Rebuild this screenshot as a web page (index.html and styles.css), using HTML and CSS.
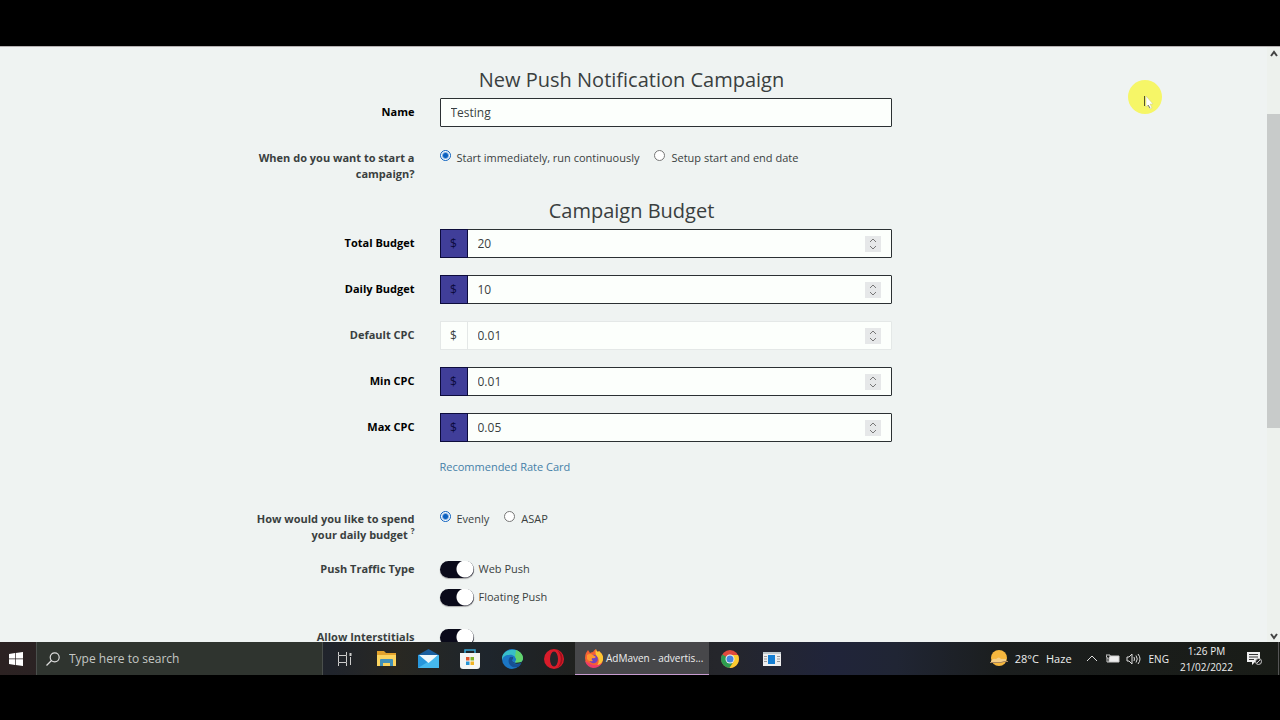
FILE: index.html
```html
<!DOCTYPE html>
<html lang="en">
<head>
    <meta charset="UTF-8">
    <meta name="viewport" content="width=device-width, initial-scale=1.0">
    <title>AdMaven - advertiser</title>
    <link rel="stylesheet" href="styles.css">
</head>
<body>
    <div class="browser">
        <main class="page">
            <form class="campaign">
                <h1>New Push Notification Campaign</h1>
                <div class="row">
                    <label class="row-label required" for="name">Name</label>
                    <input class="text-input" type="text" id="name" value="Testing">
                </div>
                <div class="row schedule" role="radiogroup" aria-labelledby="startLabel">
                    <span class="row-label" id="startLabel">When do you want to start a campaign?</span>
                    <div class="radios">
                        <label><input type="radio" name="start" checked>Start immediately, run continuously</label>
                        <label><input type="radio" name="start">Setup start and end date</label>
                    </div>
                </div>

                <h2>Campaign Budget</h2>
                <div class="row">
                    <label class="row-label required" for="totalBudget">Total Budget</label>
                    <div class="money">
                        <span class="currency">$</span>
                        <input type="number" id="totalBudget" value="20">
                        <span class="spinner">
                            <button type="button" aria-label="Increase"><svg viewBox="0 0 16 8"><path d="M5 6l3-3 3 3"/></svg></button>
                            <button type="button" aria-label="Decrease"><svg viewBox="0 0 16 8"><path d="M5 2l3 3 3-3"/></svg></button>
                        </span>
                    </div>
                </div>
                <div class="row">
                    <label class="row-label required" for="dailyBudget">Daily Budget</label>
                    <div class="money">
                        <span class="currency">$</span>
                        <input type="number" id="dailyBudget" value="10">
                        <span class="spinner">
                            <button type="button" aria-label="Increase"><svg viewBox="0 0 16 8"><path d="M5 6l3-3 3 3"/></svg></button>
                            <button type="button" aria-label="Decrease"><svg viewBox="0 0 16 8"><path d="M5 2l3 3 3-3"/></svg></button>
                        </span>
                    </div>
                </div>
                <div class="row">
                    <label class="row-label" for="defaultCpc">Default CPC</label>
                    <div class="money optional">
                        <span class="currency">$</span>
                        <input type="number" id="defaultCpc" step="0.01" value="0.01">
                        <span class="spinner">
                            <button type="button" aria-label="Increase"><svg viewBox="0 0 16 8"><path d="M5 6l3-3 3 3"/></svg></button>
                            <button type="button" aria-label="Decrease"><svg viewBox="0 0 16 8"><path d="M5 2l3 3 3-3"/></svg></button>
                        </span>
                    </div>
                </div>
                <div class="row">
                    <label class="row-label required" for="minCpc">Min CPC</label>
                    <div class="money">
                        <span class="currency">$</span>
                        <input type="number" id="minCpc" step="0.01" value="0.01">
                        <span class="spinner">
                            <button type="button" aria-label="Increase"><svg viewBox="0 0 16 8"><path d="M5 6l3-3 3 3"/></svg></button>
                            <button type="button" aria-label="Decrease"><svg viewBox="0 0 16 8"><path d="M5 2l3 3 3-3"/></svg></button>
                        </span>
                    </div>
                </div>
                <div class="row">
                    <label class="row-label required" for="maxCpc">Max CPC</label>
                    <div class="money">
                        <span class="currency">$</span>
                        <input type="number" id="maxCpc" step="0.01" value="0.05">
                        <span class="spinner">
                            <button type="button" aria-label="Increase"><svg viewBox="0 0 16 8"><path d="M5 6l3-3 3 3"/></svg></button>
                            <button type="button" aria-label="Decrease"><svg viewBox="0 0 16 8"><path d="M5 2l3 3 3-3"/></svg></button>
                        </span>
                    </div>
                </div>
                <div class="row rate-card">
                    <a href="#">Recommended Rate Card</a>
                </div>
                <div class="row spend" role="radiogroup" aria-labelledby="spendLabel">
                    <span class="row-label" id="spendLabel">How would you like to spend your daily budget <sup>?</sup></span>
                    <div class="radios">
                        <label><input type="radio" name="spend" checked>Evenly</label>
                        <label><input type="radio" name="spend">ASAP</label>
                    </div>
                </div>
                <div class="row">
                    <span class="row-label">Push Traffic Type</span>
                    <div class="switches">
                        <label><input class="switch" type="checkbox" checked>Web Push</label>
                        <label><input class="switch" type="checkbox" checked>Floating Push</label>
                    </div>
                </div>
                <div class="row">
                    <label class="row-label" for="interstitials">Allow Interstitials</label>
                    <div class="switches">
                        <input class="switch" type="checkbox" id="interstitials" checked>
                    </div>
                </div>
            </form>
        </main>
        <div class="scrollbar">
            <svg viewBox="0 0 13 14"><path d="M4 9l3-4 3 4"/></svg>
            <div class="track"><div class="thumb"></div></div>
            <svg viewBox="0 0 13 14"><path d="M4 6l3 4 3-4"/></svg>
        </div>
        <svg class="pointer" viewBox="0 0 34 34">
            <circle cx="17" cy="17" r="17" fill="#f6f667"/>
            <path d="M16.500 16v10" stroke="#55552a" fill="none"/>
            <path d="M18 16v11l2-2 2 4 2-1-2-4h3z" fill="#fff" stroke="#c9c98a" stroke-width=".5"/>
            <path d="M20 25l2 3" stroke="#777" fill="none"/>
        </svg>
    </div>

    <footer class="taskbar">
        <button class="start" aria-label="Start">
            <svg width="14" height="14" viewBox="0 0 14 14" fill="#fff"><path d="M0 2l6-1v5.600H0zM6.700 .9L14 0v6.600H6.700zM0 7.300h6V13l-6-1zM6.700 7.300H14V14l-7.300-1z"/></svg>
        </button>
        <label class="search">
            <svg width="14" height="14" viewBox="0 0 14 14" fill="none" stroke="#ddd" stroke-width="1.200"><circle cx="8.700" cy="5.300" r="4.500"/><path d="M5.500 8.500L.5 13.500"/></svg>
            <input type="text" placeholder="Type here to search" aria-label="Search">
        </label>
        <nav class="apps">
            <button aria-label="Task view">
                <svg width="15" height="14" viewBox="0 0 15 14" fill="none" stroke="#ccc"><path d="M1.500 0v3.500h8V0M1.500 14v-3.500h8V14M1.500 4v6M9.500 4v6M13.500 5v8"/><path d="M13.500 1v3" stroke-width="2"/></svg>
            </button>
            <button aria-label="File Explorer">
                <svg width="19" height="17" viewBox="0 0 19 17"><path d="M0 1h7l2 2h10v13H0z" fill="#e2a22c"/><path d="M0 5h19v11H0z" fill="#fbd460"/><path d="M3 16v-6q0-1 1-1h11q1 0 1 1v6h-3v-3H6v3z" fill="#4291b9"/></svg>
            </button>
            <button aria-label="Mail">
                <svg width="21" height="19" viewBox="0 0 21 19"><path d="M0 6l10.500-6L21 6v2H0z" fill="#1a5f9f"/><path d="M0 6h21v13H0z" fill="#2797dc"/><path d="M0 19L21 6v13z" fill="#45b9ef"/><path d="M1 6h19l-9.500 8z" fill="#eef8fc"/></svg>
            </button>
            <button aria-label="Microsoft Store">
                <svg width="20" height="20" viewBox="0 0 20 20"><path d="M5 5V1h10v4" fill="none" stroke="#3aa8d6" stroke-width="1.500"/><path d="M0 4h20v13q0 3-3 3H3q-3 0-3-3z" fill="#f3f5f4"/><path d="M6 8h3.500v3.500H6z" fill="#e0532a"/><path d="M10.500 8H14v3.500h-3.500z" fill="#80b32a"/><path d="M6 12.500h3.500V16H6z" fill="#2694d4"/><path d="M10.500 12.500H14V16h-3.500z" fill="#f0b323"/></svg>
            </button>
            <button aria-label="Edge">
                <svg width="21" height="20" viewBox="0 0 21 20"><circle cx="10" cy="10" r="10" fill="#1b76c4"/><path d="M0 9C1-1 19-3 21 9c0 5-6 6-8 4 3-3-1-8-6-7-4 0-6 2-7 5z" fill="#38bfc8"/><path d="M14 1c5 2 7 5 7 8 0 5-6 6-8 4 2-2 1-4 0-5z" fill="#62d36c"/><path d="M8 8c-4 5 1 12 8 10 2-1 3-3 3-4-5 3-9 0-9-3 0-2 1-3 1-3z" fill="#164f94"/><path d="M11 8c-2 2-1 5 2 6l7-1-1 1c-4 2-9 0-9-3z" fill="#202428"/></svg>
            </button>
            <button aria-label="Opera">
                <svg width="20" height="20" viewBox="0 0 20 20"><circle cx="10" cy="10" r="10" fill="#d91c2a"/><path d="M13 1a10 10 0 0 1 0 18c5-5 5-13 0-18z" fill="#a30f1c"/><ellipse cx="10" cy="10" rx="4" ry="7.500" fill="#24262a"/></svg>
            </button>
            <button class="running">
                <svg width="19" height="19" viewBox="0 0 19 19"><path d="M2 4l2-3 2 3q2-1 3-1 1-2 3-3 0 2 2 3 1-1 1-1 5 4 4 9-1 7-9 7-9-1-9-9 0-3 1-5z" fill="#f56034"/><path d="M12 0q0 2 2 3l1-1q5 4 4 9-2 5-6 6 4-6-1-11-1-3 0-6z" fill="#fdc633"/><path d="M1 12q2 6 8 7 6 0 9-5-6 4-11 1z" fill="#ee3b68"/><circle cx="9.500" cy="10" r="4.300" fill="#7043bd"/><path d="M3 6q3-2 6 0l3 2q-2 2-4 1-1 2 1 3-4 1-6-2z" fill="#ff9630"/></svg>
                <span>AdMaven - advertis...</span>
            </button>
            <button aria-label="Chrome">
                <svg width="18" height="18" viewBox="0 0 18 18"><circle cx="9" cy="9" r="9" fill="#e1493d"/><path d="M1.200 4.500A9 9 0 0 0 8.500 18L13 11 9 9z" fill="#2d9d50"/><path d="M8.500 18A9 9 0 0 0 17 5H9l4 6z" fill="#fbcb30"/><circle cx="9" cy="9" r="4.500" fill="#f1f1f1"/><circle cx="9" cy="9" r="3.500" fill="#4583de"/></svg>
            </button>
            <button aria-label="Reader">
                <svg width="18" height="14" viewBox="0 0 18 14"><path d="M0 0h18v14H0z" fill="#eee"/><path d="M0 0h18v2H0z" fill="#bfc8cc"/><path d="M1 4.500h3M1 7h3M1 9.500h3M14 4.500h3M14 7h3M14 9.500h3" stroke="#999"/><path d="M5 3h7v9H5z" fill="#167fd3"/></svg>
            </button>
        </nav>
        <div class="tray">
            <span class="weather">
                <svg width="18" height="17" viewBox="0 0 18 17"><circle cx="9" cy="8" r="8" fill="#f6b73e"/><path d="M1 11q2-3 5-2 3-3 5 0h5v3H1z" fill="#f5cf87"/><path d="M0 12.500h11l3-1h4" fill="none" stroke="#a9865b"/></svg>
                <span>28°C</span>
                <span>Haze</span>
            </span>
            <svg width="12" height="7" viewBox="0 0 12 7" fill="none" stroke="#ddd"><path d="M1 6l5-5 5 5"/></svg>
            <svg class="battery" width="14" height="9" viewBox="0 0 14 9"><path d="M4 2h9v6H3V5" fill="#eee" stroke="#ccc"/><path d="M0 1h4v2q-1 2-3 1zM1 4v4h2" fill="none" stroke="#ccc"/></svg>
            <svg class="volume" width="15" height="12" viewBox="0 0 15 12" fill="none" stroke="#ddd"><path d="M1 4h2l3-3v10L3 8H1zM8 4q1 2 0 4M10 2.500q2.500 3.500 0 7M12 1q4 5 0 10"/></svg>
            <span class="lang">ENG</span>
            <span class="clock"><span>1:26 PM</span><span>21/02/2022</span></span>
            <svg class="notes" width="15" height="15" viewBox="0 0 15 15"><path d="M0 1h13v10H8l-3 3v-3H0z" fill="#eee"/><path d="M2 3.500h9M2 6h9M2 8.500h5" stroke="#333"/><circle cx="11.500" cy="10.500" r="3" fill="#222" stroke="#ccc"/><path d="M10 12l3-3" stroke="#ccc"/></svg>
            <span class="show-desktop"></span>
        </div>
    </footer>
</body>
</html>
```

FILE: styles.css
```css
* {
    box-sizing: border-box;
}
body {
    margin: 0;
    padding: 46px 0 45px;
    height: 100vh;
    display: flex;
    flex-direction: column;
    background-color: #000;
    color: #3a3f3f;
    font-family: "Open Sans", "Noto Sans", sans-serif;
    font-size: 11px;
    line-height: 16px;
}
input, button {
    font: inherit;
    color: inherit;
}
button {
    border: none;
    background: none;
    padding: 0;
}
svg {
    flex: none;
}
.browser {
    flex: 1;
    min-height: 0;
    display: flex;
    position: relative;
    border-top: 1px solid #b5b1b2;
    background-color: #eff3f2;
}
.page {
    flex: 1;
    overflow: hidden;
    padding: 0 4px 0 0;
}
.campaign {
    max-width: 756px;
    margin: 0 auto;
    padding-top: 19px;
}
h1, h2 {
    margin: 0 0 4px;
    font-size: 20px;
    font-weight: 400;
    line-height: 28px;
    text-align: center;
}
.row {
    display: grid;
    grid-template-columns: 161px minmax(0, 1fr);
    column-gap: 25px;
    padding-right: 118px;
    margin-bottom: 17px;
}
.row-label {
    padding-top: 6px;
    font-weight: 700;
    text-align: right;
}
.row-label sup {
    font-size: 8px;
    line-height: 0;
}
.required {
    color: #000;
}
.schedule {
    margin-bottom: 15px;
}
.text-input {
    width: 100%;
    height: 29px;
    padding: 0 10px;
    border: 1px solid #2b3033;
    border-radius: 1px;
    background-color: #fcfffc;
    font-size: 12px;
}
.radios {
    display: flex;
    gap: 15px;
    padding-top: 6px;
}
.radios label {
    display: flex;
    gap: 6px;
}
.radios input {
    appearance: none;
    width: 11px;
    height: 11px;
    margin: 0;
    border: 1px solid #777;
    border-radius: 50%;
    background-color: #fff;
}
.radios input:checked {
    border: 1px solid #0b60c0;
    background: radial-gradient(circle, #0b60c0 2px, #fff 4px);
}
.money {
    display: flex;
    align-items: center;
    height: 29px;
    border: 1px solid #2b3033;
    border-radius: 1px;
    background-color: #fcfffc;
}
.currency {
    align-self: stretch;
    width: 28px;
    margin: -1px 0 -1px -1px;
    border: 1px solid #0c0b3c;
    background-color: #403e99;
    color: #0c0b3c;
    font-size: 12px;
    line-height: 27px;
    text-align: center;
}
.money input {
    flex: 1;
    min-width: 0;
    padding: 0 10px;
    border: none;
    outline: none;
    background: none;
    font-size: 12px;
    appearance: textfield;
}
.optional {
    border-color: #e4e8e7;
}
.optional .currency {
    border-color: #e4e8e7;
    background: none;
    color: #3a3f3f;
}
.spinner {
    display: flex;
    flex-direction: column;
    width: 16px;
    margin-right: 10px;
    background-color: #e6e8e9;
}
.spinner button {
    display: flex;
    height: 8px;
}
.spinner svg {
    width: 16px;
    height: 8px;
    fill: none;
    stroke: #777;
}
.rate-card {
    margin-bottom: 30px;
}
.rate-card a {
    grid-column: 2;
    color: #4580a8;
    text-decoration: none;
}
.spend {
    margin-bottom: 12px;
}
.switches {
    display: flex;
    flex-direction: column;
    gap: 11px;
    padding-top: 6px;
}
.switches label {
    display: flex;
    gap: 5px;
}
.switch {
    appearance: none;
    width: 34px;
    height: 17px;
    margin: 0;
    border-radius: 9px;
    background: radial-gradient(circle at 25px 8px, #fff 8px, #0a0a1a 9px);
    box-shadow: 0 1px 1px #aaa;
}
.scrollbar {
    width: 13px;
    display: flex;
    flex-direction: column;
    background-color: #edf1ed;
}
.scrollbar svg {
    width: 13px;
    height: 14px;
    fill: none;
    stroke: #444;
    stroke-width: 2;
}
.track {
    flex: 1;
    padding-top: 53px;
}
.thumb {
    height: 61%;
    background-color: #c8cbca;
}
.pointer {
    position: absolute;
    top: 33px;
    right: 118px;
    width: 34px;
    height: 34px;
}

.taskbar {
    display: flex;
    height: 33px;
    background: linear-gradient(90deg, #2c2222 0, #20242c 26%, #292822 31%, #1e252c 38%, #20211f 45%, #25262b 56%, #20243a 65%, #202534 70%, #1b1e1e 78%, #191c17 100%);
    color: #eee;
}
.taskbar button {
    display: flex;
    align-items: center;
    justify-content: center;
}
.start {
    width: 36px;
    padding-right: 5px;
}
.search {
    display: flex;
    align-items: center;
    gap: 9px;
    width: 287px;
    padding-left: 9px;
    border: 1px solid #4a4f4c;
    border-width: 0 1px;
    background-color: #2f342f;
}
.search input {
    flex: 1;
    min-width: 0;
    padding: 0;
    border: none;
    outline: none;
    background: none;
    font-size: 12px;
}
.search input::placeholder {
    color: #c4c7c4;
}
.apps {
    display: flex;
}
.apps button {
    width: 42px;
}
.apps .running {
    width: 134px;
    justify-content: flex-start;
    gap: 3px;
    padding-left: 9px;
    border-bottom: 1px solid #c79bd0;
    background-color: #47474a;
    font-size: 10px;
}
.tray {
    flex: 1;
    display: flex;
    align-items: center;
    justify-content: flex-end;
}
.weather {
    display: flex;
    align-items: center;
    gap: 7px;
    margin-right: 14px;
}
.battery {
    margin-left: 8px;
}
.volume {
    margin-left: 6px;
}
.lang {
    margin-left: 8px;
    font-size: 10px;
}
.clock {
    display: flex;
    flex-direction: column;
    margin: 0 14px 0 11px;
    font-size: 10px;
    text-align: center;
}
.show-desktop {
    align-self: stretch;
    width: 2px;
    margin-left: 16px;
    border-left: 1px solid #555;
}
```
